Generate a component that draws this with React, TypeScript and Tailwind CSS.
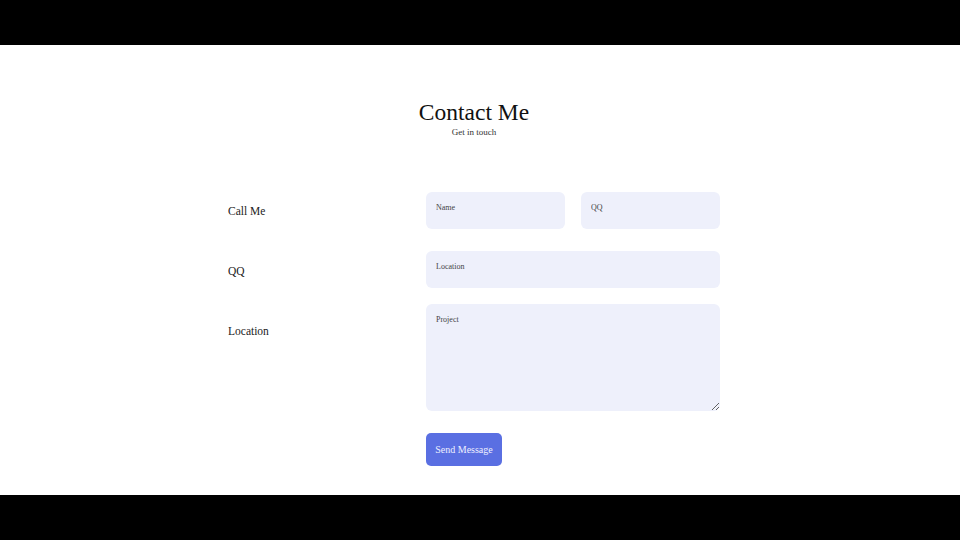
import React from "react";

export default function App() {
  return (
    <div className="w-[960px] h-[540px] bg-black flex flex-col font-['Liberation_Serif',serif]">
      <div className="mt-[45px] h-[450px] bg-white flex flex-col">
        <div className="pt-[55px] flex flex-col items-center pr-[12px]">
          <h1 className="text-[23.5px] leading-[24px] text-[#111]">Contact Me</h1>
          <p className="mt-[2px] text-[9px] leading-[12px] text-[#333]">Get in touch</p>
        </div>
        <div className="mt-[54px] ml-[228px] w-[492px] flex">
          <div className="w-[198px] flex flex-col gap-[42px] pt-[10px] text-[11.5px] leading-[18px] text-[#222]">
            <div>Call Me</div>
            <div>QQ</div>
            <div>Location</div>
          </div>
          <div className="w-[294px] flex flex-col">
            <div className="flex gap-[16px]">
              <input
                placeholder="Name"
                className="w-[139px] h-[37px] rounded-[6px] bg-[#eef0fb] px-[10px] pb-[6px] text-[8px] outline-none placeholder:text-[#444]"
              />
              <input
                placeholder="QQ"
                className="w-[139px] h-[37px] rounded-[6px] bg-[#eef0fb] px-[10px] pb-[6px] text-[8px] outline-none placeholder:text-[#444]"
              />
            </div>
            <input
              placeholder="Location"
              className="mt-[22px] w-[294px] h-[37px] rounded-[6px] bg-[#eef0fb] px-[10px] pb-[6px] text-[8px] outline-none placeholder:text-[#444]"
            />
            <textarea
              placeholder="Project"
              className="mt-[16px] w-[294px] h-[107px] rounded-[6px] bg-[#eef0fb] px-[10px] pt-[10px] text-[8px] leading-[12px] outline-none placeholder:text-[#444]"
            />
            <button className="mt-[22px] w-[76px] h-[33px] rounded-[5px] bg-[#5a6fe2] text-[10px] text-[#eef0ff]">
              Send Message
            </button>
          </div>
        </div>
      </div>
    </div>
  );
}
